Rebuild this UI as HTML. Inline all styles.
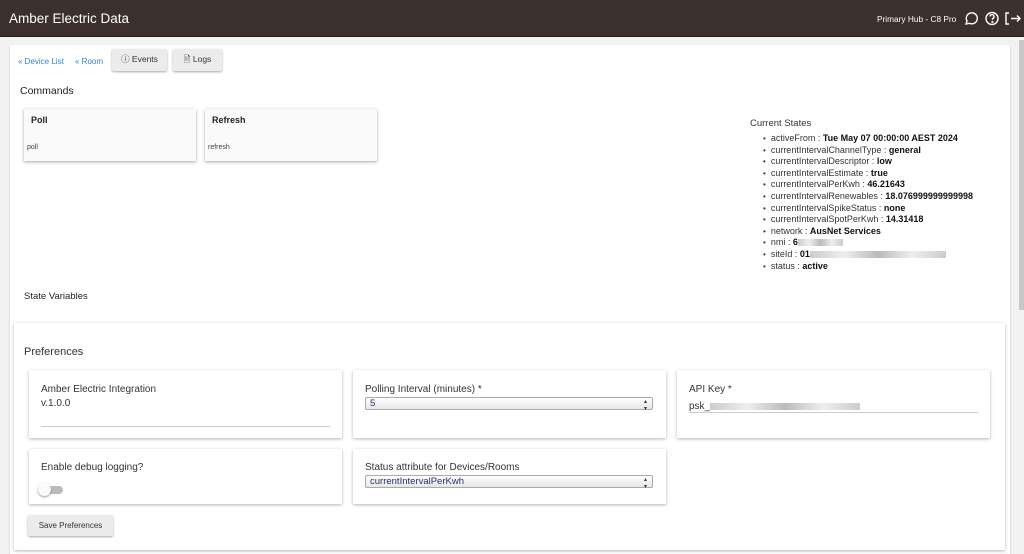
<!DOCTYPE html>
<html style="width:1024px;height:554px;overflow:hidden"><head><meta charset="utf-8"><style>
*{box-sizing:border-box;margin:0;padding:0}
body{width:1024px;height:554px;overflow:hidden;background:#f2f2f2;font-family:"Liberation Sans",sans-serif;position:relative;color:#222}
.a{position:absolute}
.hdr{left:0;top:0;width:1024px;height:37px;background:#3b302c;border-bottom:1px solid #222}
.main{left:10px;top:45px;width:1000px;height:509px;background:#fff;box-shadow:0 1px 2px rgba(0,0,0,.2)}
.btn{background:#ececec;box-shadow:0 1px 2px rgba(0,0,0,.35);font-size:8.5px;color:#333;text-align:center;border-radius:2px}
.cmd{background:#fafafa;box-shadow:0 1px 3px rgba(0,0,0,.35);width:172px;height:52px}
.card{background:#fff;box-shadow:0 1px 3px rgba(0,0,0,.3)}
.lbl{font-size:10px;color:#333}
.sel{height:13px;border:1px solid #aaa;border-radius:2px;background:linear-gradient(#fff,#e6e6e6);font-size:9.5px;color:#223366;padding-left:4px;line-height:11px}
.sel:after{content:"▴▾";position:absolute;right:2px;top:0;font-size:6px;writing-mode:vertical-lr;color:#333}
ul{list-style:none;font-size:9px;color:#333;line-height:11.6px}
ul li:before{content:"•";margin-right:5px;font-size:8px}
b{color:#111}
.blur{display:inline-block;height:7px;background:linear-gradient(90deg,#ccc,#eee,#bbb,#eee,#ccc);vertical-align:middle}
</style></head><body>
<div class="a hdr"></div>
<div class="a" style="left:9px;top:11px;color:#fff;font-size:13.5px">Amber Electric Data</div>
<div class="a" style="left:877px;top:14px;color:#fff;font-size:8.3px">Primary Hub - C8 Pro</div>
<svg class="a" style="left:963px;top:10px" width="60" height="17" viewBox="0 0 60 17" fill="none" stroke="#fff" stroke-width="1.4">
<path d="M3 14 L4 11 A5.5 5.5 0 1 1 6.5 13.3 Z"/>
<circle cx="29" cy="8.5" r="6"/><path d="M27 6.5a2 2 0 1 1 2.5 2v1.3"/><circle cx="29.4" cy="12" r=".4" fill="#fff"/>
<path d="M46 3h-3v11h3M48 8.5h9M54 5.5l3 3-3 3"/>
</svg>
<div class="a main"></div>
<div class="a" style="left:1019px;top:40px;width:5px;height:270px;background:#c8c8c8"></div>
<div class="a" style="left:18px;top:57px;font-size:8px;color:#2f86d6">« Device List</div>
<div class="a" style="left:75px;top:57px;font-size:8px;color:#2f86d6">« Room</div>
<div class="a btn" style="left:112px;top:49px;width:55px;height:22px;line-height:21px">ⓘ Events</div>
<div class="a btn" style="left:173px;top:49px;width:49px;height:22px;line-height:21px">🗎 Logs</div>
<div class="a" style="left:20px;top:85px;font-size:10.5px;color:#222">Commands</div>
<div class="a cmd" style="left:24px;top:109px"><div style="position:absolute;left:7px;top:6px;font-size:9px;font-weight:bold">Poll</div><div style="position:absolute;left:3px;top:35px;font-size:7px;color:#444">poll</div></div>
<div class="a cmd" style="left:205px;top:109px"><div style="position:absolute;left:7px;top:6px;font-size:9px;font-weight:bold">Refresh</div><div style="position:absolute;left:3px;top:35px;font-size:7px;color:#444">refresh</div></div>
<div class="a" style="left:750px;top:118px;font-size:9.5px;color:#333">Current States</div>
<ul class="a" style="left:763px;top:133px">
<li>activeFrom : <b>Tue May 07 00:00:00 AEST 2024</b></li>
<li>currentIntervalChannelType : <b>general</b></li>
<li>currentIntervalDescriptor : <b>low</b></li>
<li>currentIntervalEstimate : <b>true</b></li>
<li>currentIntervalPerKwh : <b>46.21643</b></li>
<li>currentIntervalRenewables : <b>18.076999999999998</b></li>
<li>currentIntervalSpikeStatus : <b>none</b></li>
<li>currentIntervalSpotPerKwh : <b>14.31418</b></li>
<li>network : <b>AusNet Services</b></li>
<li>nmi : <b>6</b><span class="blur" style="width:45px"></span></li>
<li>siteId : <b>01</b><span class="blur" style="width:136px"></span></li>
<li>status : <b>active</b></li>
</ul>
<div class="a" style="left:24px;top:291px;font-size:9.5px;color:#222">State Variables</div>
<div class="a card" style="left:14px;top:323px;width:991px;height:227px"></div>
<div class="a" style="left:24px;top:346px;font-size:11px;color:#333">Preferences</div>
<div class="a card" style="left:29px;top:370px;width:313px;height:68px"></div>
<div class="a lbl" style="left:41px;top:384px">Amber Electric Integration</div>
<div class="a lbl" style="left:41px;top:398px">v.1.0.0</div>
<div class="a" style="left:41px;top:426px;width:289px;height:1px;background:#ccc"></div>
<div class="a card" style="left:353px;top:370px;width:313px;height:68px"></div>
<div class="a lbl" style="left:365px;top:384px">Polling Interval (minutes) *</div>
<div class="a sel" style="left:365px;top:397px;width:288px">5</div>
<div class="a card" style="left:677px;top:370px;width:313px;height:68px"></div>
<div class="a lbl" style="left:689px;top:384px">API Key *</div>
<div class="a lbl" style="left:689px;top:401px">psk_<span class="blur" style="width:150px"></span></div>
<div class="a" style="left:689px;top:412px;width:289px;height:1px;background:#ccc"></div>
<div class="a card" style="left:29px;top:449px;width:313px;height:55px"></div>
<div class="a lbl" style="left:41px;top:462px">Enable debug logging?</div>
<div class="a" style="left:41px;top:486px;width:22px;height:8px;border-radius:4px;background:#bbb"></div>
<div class="a" style="left:38px;top:483px;width:13px;height:13px;border-radius:50%;background:#fafafa;box-shadow:0 1px 2px rgba(0,0,0,.4)"></div>
<div class="a card" style="left:353px;top:449px;width:313px;height:55px"></div>
<div class="a lbl" style="left:365px;top:462px">Status attribute for Devices/Rooms</div>
<div class="a sel" style="left:365px;top:475px;width:288px">currentIntervalPerKwh</div>
<div class="a btn" style="left:28px;top:515px;width:85px;height:21px;line-height:21px;font-size:8px">Save Preferences</div>
</body></html>
